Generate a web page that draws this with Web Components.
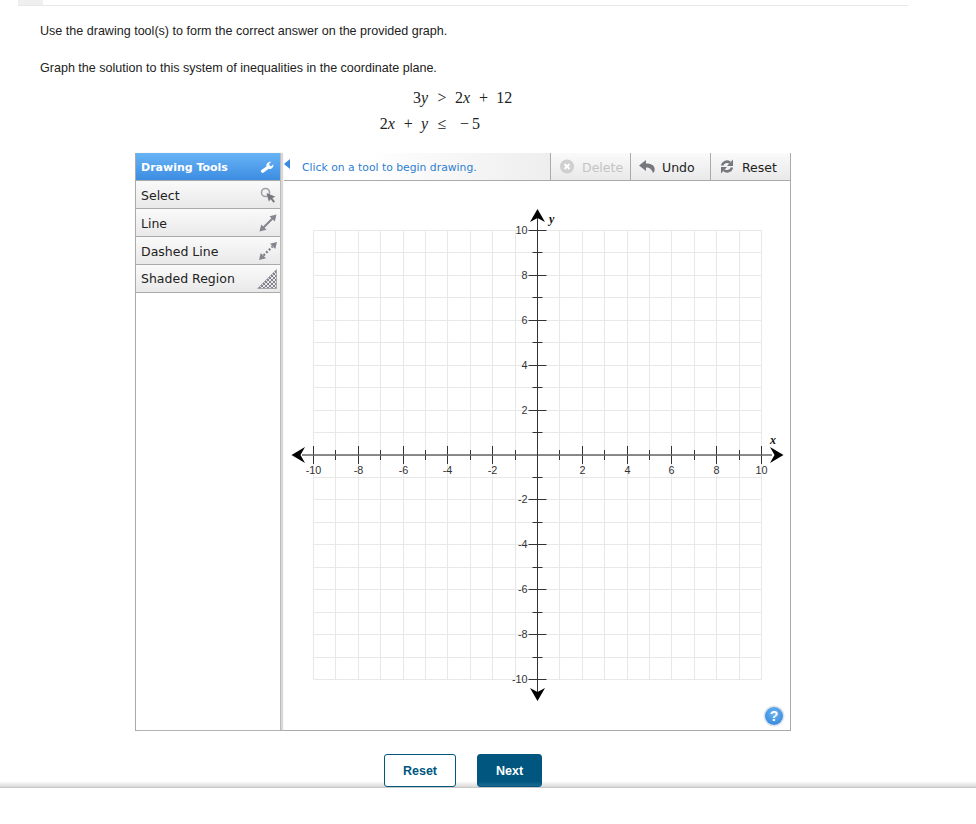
<!DOCTYPE html>
<html lang="en">
<head>
<meta charset="utf-8">
<title>Graph</title>
<style>
  html, body { margin: 0; background: #fff; }
  body { font-family: "Liberation Sans", Arial, sans-serif; color: #222; height: 824px; overflow: hidden; }
</style>
</head>
<body>
<top-strip></top-strip>
<question-prompt>
  <p>Use the drawing tool(s) to form the correct answer on the provided graph.</p>
  <p>Graph the solution to this system of inequalities in the coordinate plane.</p>
</question-prompt>
<math-system></math-system>
<graph-widget>
  <tool-row slot="tools" label="Select" icon="select"></tool-row>
  <tool-row slot="tools" label="Line" icon="line"></tool-row>
  <tool-row slot="tools" label="Dashed Line" icon="dashed"></tool-row>
  <tool-row slot="tools" label="Shaded Region" icon="shade" flush></tool-row>
</graph-widget>
<action-bar>
  <action-button>Reset</action-button>
  <action-button primary>Next</action-button>
</action-bar>

<script>
const icons = {
  select: `<svg width="18" height="18" viewBox="0 0 18 18"><circle cx="6.500" cy="6.500" r="4" fill="#f3f3f3" stroke="#a0a0a8" stroke-width="1.600"/><path d="M7.500 7l9 3.800-3.200 1.300 2.700 3.500-1.600 1.200-2.600-3.600-2 2.400z" fill="#77777f"/></svg>`,
  line: `<svg width="18" height="18" viewBox="0 0 18 18"><path d="M3.500 14.500L14.500 3.500" stroke="#85858f" stroke-width="2"/><path d="M17.500 .5l-1.700 7-5.300-5.300zM.5 17.500l1.700-7 5.300 5.300z" fill="#85858f"/></svg>`,
  dashed: `<svg width="18" height="18" viewBox="0 0 18 18"><path d="M4.500 13.500L13.500 4.500" stroke="#7d7d87" stroke-width="2.200" stroke-dasharray="2 1.800"/><path d="M18 0l-1.700 7-5.300-5.300zM0 18l1.700-7 5.300 5.300z" fill="#85858f"/></svg>`,
  shade: `<svg width="20" height="20" viewBox="0 0 20 20"><defs><pattern id="chk" width="4" height="4" patternUnits="userSpaceOnUse"><rect width="4" height="4" fill="#e8e8ec"/><rect width="2" height="2" fill="#85858f"/><rect x="2" y="2" width="2" height="2" fill="#85858f"/></pattern></defs><path d="M.5 19.500L19.500 .5v19z" fill="url(#chk)" stroke="#9a9aa2" stroke-width=".8"/></svg>`
}

class TopStrip extends HTMLElement {
  constructor () {
    super()
    this.attachShadow({ mode: 'open' }).innerHTML = `
      <style>
        :host { display: block; height: 6px; width: 890px; margin-left: 18px; box-sizing: border-box; border-bottom: 1px solid #e8e8e8; }
        div { width: 25px; height: 5px; background: #efefef; }
      </style>
      <div></div>`
  }
}

class QuestionPrompt extends HTMLElement {
  constructor () {
    super()
    this.attachShadow({ mode: 'open' }).innerHTML = `
      <style>
        :host { display: block; padding: 18px 0 0 40px; font-size: 12.55px; line-height: 15px; color: #222; }
        ::slotted(p) { margin: 0 0 22px; }
      </style>
      <slot></slot>`
  }
}

class MathSystem extends HTMLElement {
  constructor () {
    super()
    this.attachShadow({ mode: 'open' }).innerHTML = `
      <style>
        :host { display: grid; grid-template-columns: 50px 26px auto; justify-content: start; margin: -9px 0 0 379px; row-gap: 8px;
          font: 16px/18px "Liberation Serif", "Times New Roman", serif; color: #222; white-space: pre; }
        i { font-style: italic; letter-spacing: 1px; }
        .l { display: flex; justify-content: flex-end; gap: 8px; }
        .r { display: flex; gap: 8px; }
        .o { text-align: center; }
        .n { padding-left: 5px; gap: 3px; }
      </style>
      <span class="l"><span>3<i>y</i></span></span><span class="o">&gt;</span><span class="r"><span>2<i>x</i></span><span>+</span><span>12</span></span>
      <span class="l"><span>2<i>x</i></span><span>+</span><i>y</i></span><span class="o">≤</span><span class="r n"><span>−</span><span>5</span></span>`
  }
}

class ToolRow extends HTMLElement {
  constructor () {
    super()
    this.attachShadow({ mode: 'open' }).innerHTML = `
      <style>
        :host { display: flex; align-items: center; justify-content: space-between; height: 27px; padding: 0 3px 0 5px;
          border-bottom: 1px solid #aaa; background: linear-gradient(#fafafa, #e9e9e9); font-size: 12.5px; color: #222; }
        svg { display: block; }
        .t { padding-top: 2px; }
        :host([flush]) .t { padding-top: 0; }
      </style>
      <span class="t"></span><span class="i"></span>`
  }

  connectedCallback () {
    this.shadowRoot.querySelector('.t').textContent = this.getAttribute('label')
    this.shadowRoot.querySelector('.i').innerHTML = icons[this.getAttribute('icon')]
  }
}

class ToolbarButton extends HTMLElement {
  constructor () {
    super()
    this.attachShadow({ mode: 'open' }).innerHTML = `
      <style>
        :host { display: flex; align-items: center; gap: 7px; width: 80px; box-sizing: border-box; padding-left: 8px; height: 27px;
          border-left: 1px solid #aaa; background: linear-gradient(#fafafa, #e9e9e9); font-size: 12.5px; color: #222; }
        :host([disabled]) { color: #c4c4c4; }
        ::slotted(svg) { display: block; flex: none; }
        span { padding-top: 2px; }
      </style>
      <slot name="icon"></slot><span><slot></slot></span>`
  }
}

class GraphCanvas extends HTMLElement {
  constructor () {
    super()
    const x0 = 313.5; const y0 = 230.5; const sx = 22.4; const sy = 22.45
    const cx = x0 + 10 * sx; const cy = y0 + 10 * sy
    let grid = ''; let axes = ''; let labels = ''
    for (let i = 0; i <= 20; i++) {
      const x = Math.floor(x0 + i * sx) + 0.5
      const y = Math.floor(y0 + i * sy) + 0.5
      grid += `<path d="M${x} ${y0}V${y0 + 20 * sy}M${x0} ${y}H${x0 + 20 * sx}"/>`
      if (i === 10) continue
      const major = i % 2 === 0
      const t = major ? 9 : 5
      axes += `<path d="M${x} ${cy - t}V${cy + t}M${cx - t} ${y}H${cx + t}"/>`
      if (major) {
        const v = i - 10
        labels += `<text x="${x}" y="${cy + 19}" text-anchor="middle">${v}</text>`
        labels += `<text x="${cx - 10}" y="${y + 3.5}" text-anchor="end">${-v}</text>`
      }
    }
    this.attachShadow({ mode: 'open' }).innerHTML = `
      <style>
        :host { display: block; width: 506px; height: 549px; }
        svg { display: block; }
        .grid { stroke: #e8e8e8; fill: none; stroke-width: 1.15; }
        .axes { stroke: #333; fill: none; }
        text { font: 10.8px "Liberation Sans", Arial, sans-serif; fill: #333; }
        .var { font: italic bold 12px "Liberation Serif", "Times New Roman", serif; fill: #111; }
      </style>
      <svg width="506" height="549" viewBox="284 181 506 549">
        <g class="grid">${grid}</g>
        <g class="axes">${axes}</g>
        <path d="M302 ${cy}H772" stroke="#666" stroke-width="1.500"/>
        <path d="M${cx} 218V692" stroke="#333" stroke-width="1"/>
        <path d="M291.500 ${cy}l13.500-8-4.500 8 4.500 8zM783.500 ${cy}l-13.500-8 4.500 8-4.500 8zM${cx} 209l-7.500 13 7.500-4 7.500 4zM${cx} 701l-7.500-13 7.500 4 7.500-4z" fill="#000"/>
        ${labels}
        <text class="var" x="549" y="223">y</text>
        <text class="var" x="770" y="444">x</text>
      </svg>`
  }
}

class GraphWidget extends HTMLElement {
  constructor () {
    super()
    this.attachShadow({ mode: 'open' }).innerHTML = `
      <style>
        :host { display: flex; position: relative; box-sizing: border-box; width: 656px; height: 578px; margin: 20px 0 0 135px;
          border: 1px solid #aaa; border-top: 0; font-family: "DejaVu Sans", Verdana, sans-serif; }
        aside { width: 145px; flex: none; box-sizing: border-box; border-right: 1px solid #bbb; box-shadow: 2px 0 1px #d8d8d8; }
        .head { display: flex; align-items: center; justify-content: space-between; height: 28px; padding: 0 6px 0 5px; box-sizing: border-box;
          background: linear-gradient(#68b4f6, #3c8ce2); color: #fff; font-size: 11px; font-weight: bold; border-bottom: 1px solid #aaa; }
        .head span { padding-top: 2px; }
        main { flex: 1; min-width: 0; margin-left: 3px; }
        .bar { display: flex; height: 27px; border-bottom: 1px solid #aaa; }
        .hint { position: relative; width: 266px; flex: none; box-sizing: border-box; padding: 7px 0 0 18px; font-size: 10.8px; line-height: 16px; color: #2f7fd0;
          background: linear-gradient(90deg, #fff 30%, #eee); }
        .hint::before { content: ""; position: absolute; left: 0; top: 6px; border: 5.500px solid transparent; border-left: 0; border-right: 6px solid #3a8ae0; }
        .help { position: absolute; right: 7px; bottom: 5px; width: 18px; height: 18px; border-radius: 50%; background: radial-gradient(circle at 50% 35%, #6db4f2, #2a7fd8);
          box-shadow: 0 0 0 1.500px #dde3ea; color: #fff; font: bold 14px/18px "Liberation Sans", Arial, sans-serif; text-align: center; }
      </style>
      <aside>
        <div class="head"><span>Drawing Tools</span>
          <svg width="14" height="14" viewBox="0 0 15 14"><path d="M1.500 12.500c-1-1-.6-1.800.4-2.500l5-3.600c-.7-2.600 1.700-5.400 5.300-4.900L9.800 3.600l.5 2 2.100.4 1.900-2c.5 3.300-2.200 5.500-5 5L4 13c-.8.700-1.700.4-2.500-.5z" fill="#fff"/></svg>
        </div>
        <slot name="tools"></slot>
      </aside>
      <main>
        <div class="bar">
          <div class="hint">Click on a tool to begin drawing.</div>
          <toolbar-button disabled><svg slot="icon" width="16" height="15" viewBox="0 0 16 15"><circle cx="8" cy="7.500" r="7" fill="#cfcfcf"/><path d="M5.500 5l5 5M10.500 5l-5 5" stroke="#fff" stroke-width="2"/></svg>Delete</toolbar-button>
          <toolbar-button><svg slot="icon" width="16" height="14" viewBox="0 0 16 14"><path d="M7 0L0 5.500 7 11V7.500c3.500 0 5.500 1.500 7 5.500 1.500-1 2-3 1.500-5C14.800 5 12 3.500 7 3.500z" fill="#77777f"/></svg>Undo</toolbar-button>
          <toolbar-button><svg slot="icon" width="16" height="15" viewBox="0 0 16 15"><path d="M3 6.500A5 5 0 0 1 11 3.800M13 8.500A5 5 0 0 1 5 11.200" fill="none" stroke="#77777f" stroke-width="2.600"/><path d="M14 .5V7H8zM2 14.500V8h6z" fill="#77777f"/></svg>Reset</toolbar-button>
        </div>
        <graph-canvas></graph-canvas>
      </main>
      <div class="help">?</div>`
  }
}

class ActionButton extends HTMLElement {
  constructor () {
    super()
    this.attachShadow({ mode: 'open' }).innerHTML = `
      <style>
        :host { display: flex; align-items: center; justify-content: center; box-sizing: border-box; height: 33px; width: 72px; border-radius: 3px;
          border: 1px solid #00567f; background: #fff; color: #00567f; font: bold 12.500px "Liberation Sans", Arial, sans-serif; position: relative; }
        :host([primary]) { width: 65px; background: linear-gradient(#00567f 85%, #1a6a92); color: #fff; }
      </style>
      <slot></slot>`
  }
}

class ActionBar extends HTMLElement {
  constructor () {
    super()
    this.attachShadow({ mode: 'open' }).innerHTML = `
      <style>
        :host { display: flex; gap: 21px; height: 34px; box-sizing: border-box; margin-top: 23px; padding-left: 384px;
          border-bottom: 1px solid #c8c8c8; background: linear-gradient(transparent 27px, #d8d8d8); }
      </style>
      <slot></slot>`
  }
}

customElements.define('top-strip', TopStrip)
customElements.define('question-prompt', QuestionPrompt)
customElements.define('math-system', MathSystem)
customElements.define('tool-row', ToolRow)
customElements.define('toolbar-button', ToolbarButton)
customElements.define('graph-canvas', GraphCanvas)
customElements.define('graph-widget', GraphWidget)
customElements.define('action-button', ActionButton)
customElements.define('action-bar', ActionBar)
</script>
</body>
</html>
